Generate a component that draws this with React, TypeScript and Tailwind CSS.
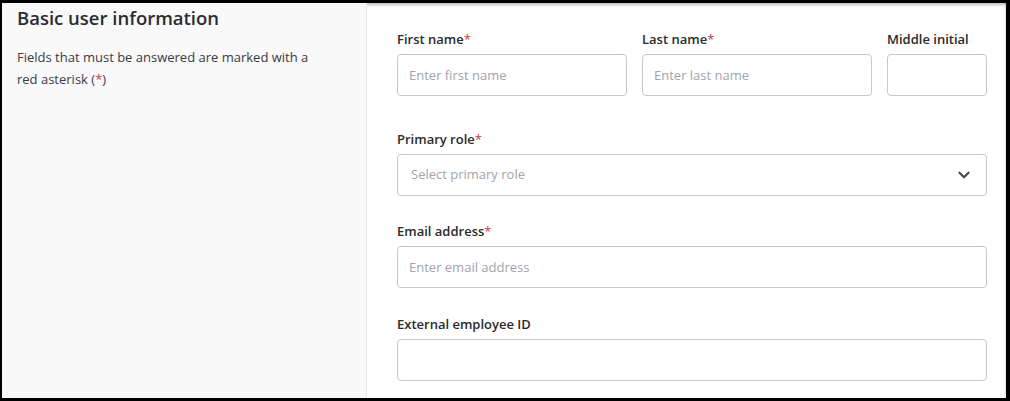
import { ChevronDown } from "lucide-react"

const font = { fontFamily: '"Open Sans", "Noto Sans", sans-serif' }

function Label({ text, required }: { text: string; required?: boolean }) {
  return (
    <div className="mb-[5px] h-5 leading-5 text-[13px] font-semibold text-[#2a2a2a] whitespace-nowrap">
      {text}
      {required && <span className="text-[#d13438] font-normal">*</span>}
    </div>
  )
}

function TextInput({ placeholder }: { placeholder?: string }) {
  return (
    <input
      type="text"
      placeholder={placeholder}
      className="block w-full h-[42px] rounded-[4px] border border-[#c8c8cc] bg-white px-[11px] text-[13px] text-[#252525] placeholder:text-[#a3a3ad] outline-none"
    />
  )
}

export default function App() {
  return (
    <div style={font} className="w-[1010px] h-[401px] bg-black overflow-hidden">
      <div className="mt-[3px] ml-[2px] w-[1004px] h-[395px] flex bg-white shadow-[inset_0_2px_3px_rgba(0,0,0,0.25)]">
        <aside className="w-[365px] shrink-0 bg-[#f9f9f9] border-r border-[#ebebeb] pl-[15px] pr-6 pt-[1px]">
          <h2 className="text-[18.5px] leading-7 font-semibold text-[#2b2b33]">Basic user information</h2>
          <p className="mt-[14px] text-[13px] leading-[22px] text-[#3a3946] w-[308px]">
            Fields that must be answered are marked with a red asterisk (<span className="text-[#d13438]">*</span>)
          </p>
        </aside>

        <main className="flex-1 pl-[30px] pt-[26px]">
          <div className="w-[590px]">
            <div className="grid grid-cols-[230px_230px_100px] gap-x-[15px] mb-[33px]">
              <div>
                <Label text="First name" required />
                <TextInput placeholder="Enter first name" />
              </div>
              <div>
                <Label text="Last name" required />
                <TextInput placeholder="Enter last name" />
              </div>
              <div>
                <Label text="Middle initial" />
                <TextInput />
              </div>
            </div>

            <div className="mb-[25px]">
              <Label text="Primary role" required />
              <div className="flex items-center justify-between h-[42px] rounded-[4px] border border-[#c8c8cc] bg-white pl-[13px] pr-[13px]">
                <span className="text-[13px] text-[#a3a3ad]">Select primary role</span>
                <ChevronDown className="w-[18px] h-[18px] text-[#4b4b57]" strokeWidth={3} />
              </div>
            </div>

            <div className="mb-[26px]">
              <Label text="Email address" required />
              <TextInput placeholder="Enter email address" />
            </div>

            <div>
              <Label text="External employee ID" />
              <TextInput />
            </div>
          </div>
        </main>
      </div>
    </div>
  )
}
